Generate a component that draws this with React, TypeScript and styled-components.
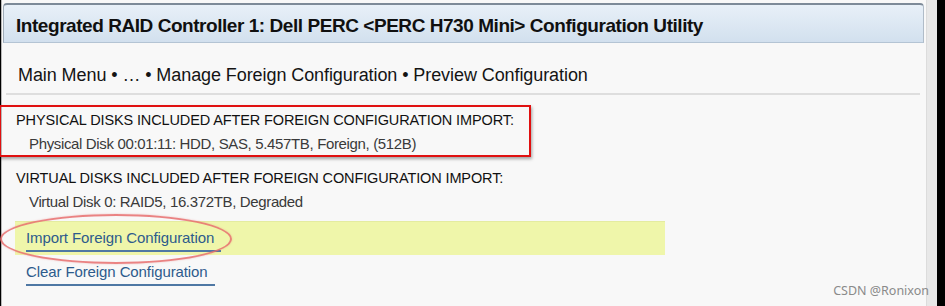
import styled, { createGlobalStyle } from 'styled-components';

const Global = createGlobalStyle`
  html, body {
    margin: 0;
    padding: 0;
    background: #000;
  }
  body {
    font-family: "Liberation Sans", Arial, sans-serif;
  }
`;

const Screen = styled.div`
  position: relative;
  display: flex;
  width: 945px;
  height: 306px;
  overflow: hidden;
`;

const Main = styled.div`
  flex: 1;
  background: #f8f8f8;
  border-left: 1px solid #b8b8b8;
  margin-left: 1px;
  padding: 3px 0 0 1px;
`;

const Gutter = styled.div`
  width: 10px;
  background: #e8e8e8;
  border-left: 1px solid #dcdcdc;
`;

const Edge = styled.div`
  width: 8px;
  background: #000;
`;

const TitleBar = styled.div`
  box-sizing: border-box;
  height: 40px;
  border-top: 2px solid #7d8a98;
  border-left: 1px solid #a0acb8;
  border-right: 1px solid #b0bcc8;
  border-bottom: 1px solid #b4c4d4;
  border-radius: 4px 4px 0 0;
  background: linear-gradient(#e8f0f8, #d2e0ee);
  display: flex;
  align-items: center;
  padding: 5px 0 0 12px;
  margin-right: 2px;
`;

const Title = styled.h1`
  margin: 0;
  font-size: 19px;
  font-weight: bold;
  color: #101010;
  letter-spacing: -0.45px;
`;

const Crumbs = styled.div`
  box-sizing: border-box;
  margin: 0 6px 0 3px;
  height: 52px;
  display: flex;
  align-items: center;
  padding: 14px 0 0 12px;
  border-bottom: 2px solid #dedede;
  font-size: 18px;
  color: #141414;
  letter-spacing: -0.08px;
`;

const Body = styled.div`
  padding-top: 10px;
`;

const Marked = styled.div`
  margin-left: -4px;
  width: 528px;
  border: 2px solid #e01010;
  box-shadow: 1px 2px 3px rgba(0, 0, 0, 0.35);
  padding-top: 1px;
`;

const Section = styled.div`
  margin-top: 9px;
`;

const Heading = styled.div<{ $indent: number }>`
  padding-left: ${(p) => p.$indent}px;
  font-size: 14.5px;
  color: #111;
  height: 24px;
  line-height: 24px;
  letter-spacing: -0.12px;
`;

const Item = styled.div<{ $indent: number; $h?: number }>`
  padding-left: ${(p) => p.$indent}px;
  font-size: 15px;
  color: #3a3a3a;
  height: ${(p) => p.$h ?? 24}px;
  line-height: ${(p) => p.$h ?? 24}px;
  letter-spacing: -0.35px;
`;

const Actions = styled.div`
  margin-top: 7px;
  display: flex;
  flex-direction: column;
`;

const ActionRow = styled.div<{ $active?: boolean }>`
  position: relative;
  box-sizing: border-box;
  width: 650px;
  height: 34px;
  margin-left: 12px;
  background: ${(p) => (p.$active ? '#eff6aa' : 'transparent')};
  border-top: 1px solid ${(p) => (p.$active ? '#e4eca0' : 'transparent')};
  display: flex;
  align-items: flex-start;
  padding: 7px 0 0 11px;
`;

const ActionLink = styled.a`
  font-size: 15px;
  line-height: 17px;
  color: #2d5b8c;
  text-decoration: none;
  letter-spacing: -0.1px;
  padding: 0 7px 4px 0;
  border-bottom: 2px solid #4f78a4;
  cursor: pointer;
`;

const Ring = styled.div`
  position: absolute;
  left: -15px;
  top: -8px;
  width: 228px;
  height: 46px;
  border: 2px solid rgba(232, 110, 110, 0.85);
  border-radius: 50%;
  box-shadow: 0 0 2px rgba(232, 110, 110, 0.4);
  pointer-events: none;
`;

const Watermark = styled.div`
  position: absolute;
  right: 16px;
  bottom: 7px;
  font-family: "Noto Sans", "Liberation Sans", sans-serif;
  font-size: 12.5px;
  color: #8a8a8a;
`;

const physical = ['Physical Disk 00:01:11: HDD, SAS, 5.457TB, Foreign, (512B)'];
const virtual = ['Virtual Disk 0: RAID5, 16.372TB, Degraded'];

export default function App() {
  return (
    <>
      <Global />
      <Screen>
        <Main>
          <TitleBar>
            <Title>Integrated RAID Controller 1: Dell PERC &lt;PERC H730 Mini&gt; Configuration Utility</Title>
          </TitleBar>
          <Crumbs>Main Menu • … • Manage Foreign Configuration • Preview Configuration</Crumbs>
          <Body>
            <Marked>
              <Heading $indent={15}>PHYSICAL DISKS INCLUDED AFTER FOREIGN CONFIGURATION IMPORT:</Heading>
              {physical.map((d) => (
                <Item key={d} $indent={28} $h={23}>{d}</Item>
              ))}
            </Marked>
            <Section>
              <Heading $indent={13}>VIRTUAL DISKS INCLUDED AFTER FOREIGN CONFIGURATION IMPORT:</Heading>
              {virtual.map((d) => (
                <Item key={d} $indent={26}>{d}</Item>
              ))}
            </Section>
            <Actions>
              <ActionRow $active>
                <ActionLink>Import Foreign Configuration</ActionLink>
                <Ring />
              </ActionRow>
              <ActionRow>
                <ActionLink>Clear Foreign Configuration</ActionLink>
              </ActionRow>
            </Actions>
          </Body>
        </Main>
        <Gutter />
        <Edge />
        <Watermark>CSDN @Ronixon</Watermark>
      </Screen>
    </>
  );
}
